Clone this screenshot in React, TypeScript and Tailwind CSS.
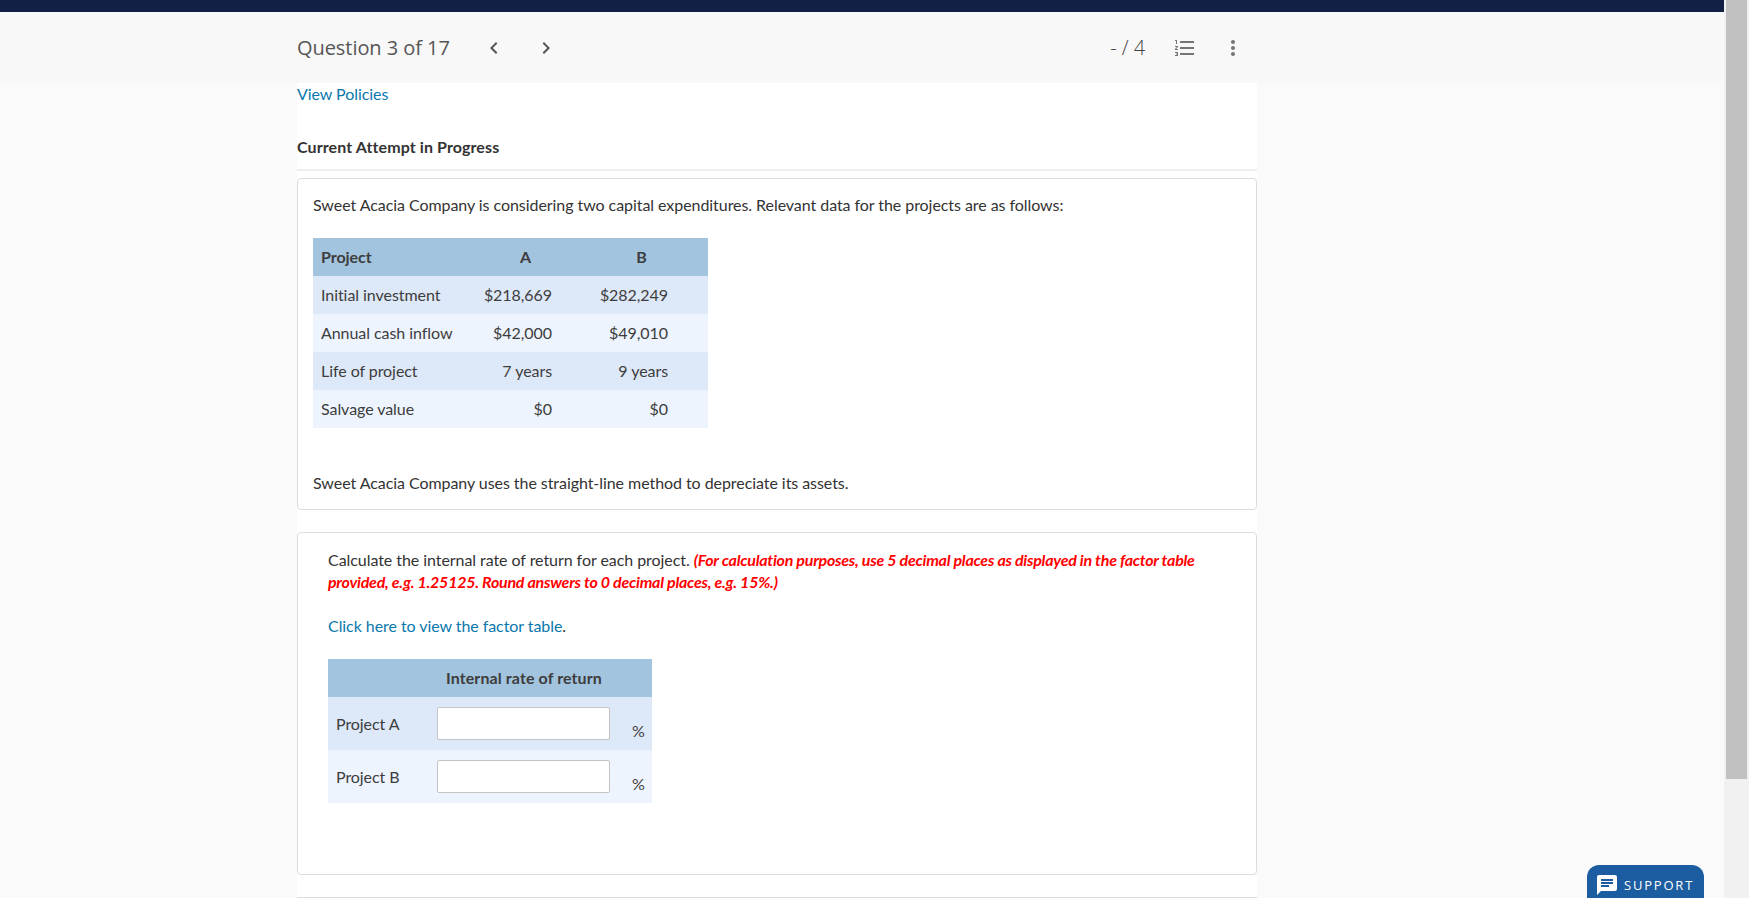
import { useState } from 'react';

const rows = [
  { label: 'Initial investment', a: '$218,669', b: '$282,249' },
  { label: 'Annual cash inflow', a: '$42,000', b: '$49,010' },
  { label: 'Life of project', a: '7 years', b: '9 years' },
  { label: 'Salvage value', a: '$0', b: '$0' },
];

function Icon({ d, className }: { d: string; className: string }) {
  return (
    <svg viewBox="0 0 24 24" fill="currentColor" className={className}>
      <path d={d} />
    </svg>
  );
}

function Header() {
  return (
    <div className="h-[71px] shrink-0 bg-[#f8f8f8] pl-[297px] pr-[479px] flex items-center text-[#555] font-['Open_Sans',sans-serif]">
      <span className="text-[20px] w-[180px] shrink-0">Question 3 of 17</span>
      <Icon d="M15.41 7.41L14 6l-6 6 6 6 1.41-1.41L10.83 12z" className="w-6 h-6 ml-[5px] shrink-0" />
      <Icon d="M8.59 16.59L10 18l6-6-6-6-1.41 1.41L13.17 12z" className="w-6 h-6 ml-[28px] shrink-0" />
      <span className="ml-auto text-[20px] font-light text-[#444]">- / 4</span>
      <Icon d="M2 17h2v.5H3v1h1v.5H2v1h3v-4H2v1zm1-9h1V4H2v1h1v3zm-1 3h1.8L2 13.1v.9h3v-1H3.2L5 10.9V10H2v1zm5-6v2h14V5H7zm0 14h14v-2H7v2zm0-6h14v-2H7v2z" className="w-6 h-6 ml-[28px] text-[#757575] shrink-0" />
      <Icon d="M12 8c1.1 0 2-.9 2-2s-.9-2-2-2-2 .9-2 2 .9 2 2 2zm0 2c-1.1 0-2 .9-2 2s.9 2 2 2 2-.9 2-2-.9-2-2-2zm0 6c-1.1 0-2 .9-2 2s.9 2 2 2 2-.9 2-2-.9-2-2-2z" className="w-6 h-6 ml-6 text-[#757575] shrink-0" />
    </div>
  );
}

function ProjectTable() {
  return (
    <table className="w-[395px] border-collapse table-fixed text-[#3d3d3d]">
      <thead>
        <tr className="h-[38px] bg-[#a3c4de]">
          <th className="w-[153px] pl-2 text-left font-bold">Project</th>
          <th className="w-[116px] pl-[3px] text-center font-bold">A</th>
          <th className="pr-[7px] text-center font-bold">B</th>
        </tr>
      </thead>
      <tbody>
        {rows.map((row, i) => (
          <tr key={row.label} className={i % 2 === 0 ? 'h-[38px] bg-[#dde8f8]' : 'h-[38px] bg-[#eef4fe]'}>
            <td className="pl-2">{row.label}</td>
            <td className="text-right pr-[30px]">{row.a}</td>
            <td className="text-right pr-[40px]">{row.b}</td>
          </tr>
        ))}
      </tbody>
    </table>
  );
}

function RateInput({ label, odd }: { label: string; odd: boolean }) {
  const [value, setValue] = useState('');
  return (
    <div className={odd ? 'h-[53px] flex items-center bg-[#dde8f8] pl-2' : 'h-[53px] flex items-center bg-[#eef4fe] pl-2'}>
      <span className="w-[101px] shrink-0 text-[#3d3d3d] mt-[1px]">{label}</span>
      <input
        value={value}
        onChange={(e) => setValue(e.target.value)}
        className="w-[173px] h-[33px] bg-white border border-[#c4c4c4] rounded-[2px] -mt-[1px]"
      />
      <span className="ml-[22px] mt-[15px] text-[#3d3d3d]">%</span>
    </div>
  );
}

export default function App() {
  return (
    <div className="h-[898px] overflow-hidden flex bg-[#fafafa] font-['Lato',sans-serif] text-[16px] text-[#333] tracking-[-0.06px]">
      <div className="flex-1 min-w-0 flex flex-col">
        <div className="h-3 shrink-0 bg-[#132046]" />
        <Header />
        <div className="w-[960px] ml-[297px] flex-1 bg-white flex flex-col">
          <a className="h-[24px] leading-[24px] text-[#0b78ad] w-fit mt-[-1px]">View Policies</a>
          <div className="mt-[24px] h-[34px] border-b-2 border-[#efefef] font-bold text-[#333] leading-[24px] pt-[5px] box-content tracking-[0.1px]">
            Current Attempt in Progress
          </div>
          <div className="mt-[7px] h-[332px] shrink-0 border border-[#dcdcdc] rounded-[4px] px-[15px] pt-[14px]">
            <p className="h-[24px] leading-[24px]">
              Sweet Acacia Company is considering two capital expenditures. Relevant data for the projects are as follows:
            </p>
            <div className="mt-[21px]">
              <ProjectTable />
            </div>
            <p className="mt-[43px] leading-[24px]">Sweet Acacia Company uses the straight-line method to depreciate its assets.</p>
          </div>
          <div className="mt-[22px] h-[343px] shrink-0 border border-[#dcdcdc] rounded-[4px] pl-[30px] pr-[20px] pt-[16px]">
            <p className="leading-[22px]">
              Calculate the internal rate of return for each project.{' '}
              <em className="font-bold text-[#ff0000] tracking-[-0.25px]">
                (For calculation purposes, use 5 decimal places as displayed in the factor table provided, e.g. 1.25125. Round answers to 0 decimal places, e.g. 15%.)
              </em>
            </p>
            <p className="mt-[21px] leading-[24px] text-[#0b78ad]">
              Click here to view the factor table<span className="text-[#333]">.</span>
            </p>
            <div className="mt-[21px] w-[324px]">
              <div className="h-[38px] bg-[#a3c4de] flex items-center pl-[118px] font-bold text-[#3d3d3d] tracking-[0.1px]">Internal rate of return</div>
              <RateInput label="Project A" odd />
              <RateInput label="Project B" odd={false} />
            </div>
          </div>
          <div className="mt-[22px] border-t border-[#dcdcdc]" />
        </div>
      </div>
      <div className="w-[25px] shrink-0 bg-[#f1f1f1] pl-[2px] pr-[2px]">
        <div className="h-[779px] bg-[#c1c1c1]" />
      </div>
      <button className="fixed left-[1587px] bottom-0 w-[117px] h-[33px] bg-[#1c5da2] rounded-t-[12px] flex items-start pl-2 pt-2 text-white">
        <Icon d="M20 2H4c-1.1 0-1.99.9-1.99 2L2 22l4-4h14c1.1 0 2-.9 2-2V4c0-1.1-.9-2-2-2zM6 9h12v2H6V9zm8 5H6v-2h8v2zm4-6H6V6h12v2z" className="w-6 h-6 shrink-0" />
        <span className="ml-[5px] text-[13px] leading-[24px] tracking-[1.8px] font-['Open_Sans',sans-serif]">SUPPORT</span>
      </button>
    </div>
  );
}
